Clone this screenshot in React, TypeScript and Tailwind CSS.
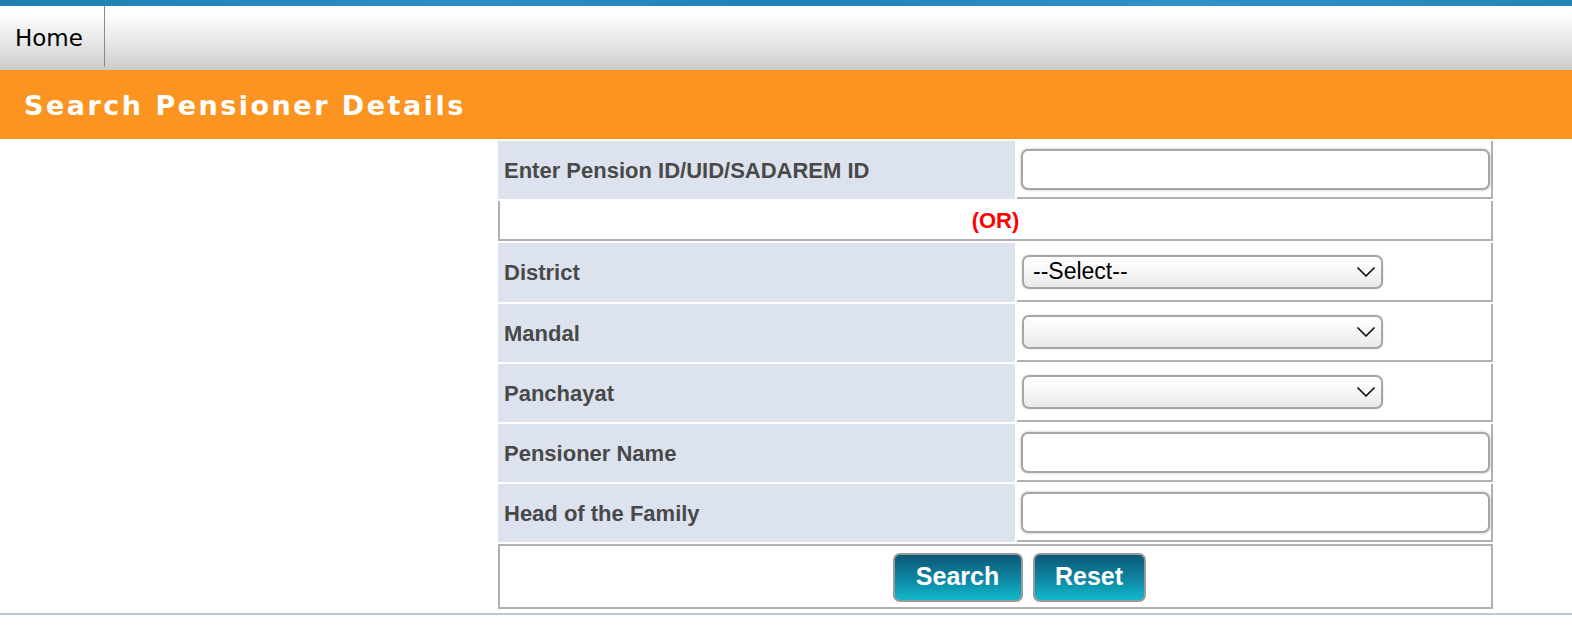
import React from "react";

function Chevron() {
  return (
    <svg width="18" height="10" viewBox="0 0 18 10" fill="none">
      <polyline points="1,1 9,9 17,1" stroke="#111" strokeWidth="1.7" strokeLinejoin="round" strokeLinecap="round" />
    </svg>
  );
}

function Label({ children, tall }: { children: React.ReactNode; tall?: boolean }) {
  return (
    <div
      className={`w-[517px] shrink-0 bg-[#dce3ee] pl-[6px] flex items-center text-[22px] font-bold text-[#494949] ${tall ? "h-[59px]" : "h-[58px]"}`}
    >
      {children}
    </div>
  );
}

function TextRow({ label }: { label: string }) {
  return (
    <div className="flex gap-[2px]">
      <Label>{label}</Label>
      <div className="flex-1 flex items-center border-r-2 border-b-2 border-[#b0b0b0] pl-[4px] pr-[1px]">
        <input
          type="text"
          className="w-full h-[41px] rounded-[7px] border-2 border-[#a6a6a6] bg-white shadow-[0_0_3px_rgba(0,0,0,0.25)] outline-none"
        />
      </div>
    </div>
  );
}

function SelectRow({ label, value, tall }: { label: string; value: string; tall?: boolean }) {
  return (
    <div className="flex gap-[2px]">
      <Label tall={tall}>{label}</Label>
      <div className="flex-1 flex items-center border-r-2 border-b-2 border-[#b0b0b0] pl-[5px]">
        <div className="w-[361px] h-[34px] rounded-[7px] border-2 border-[#a6a6a6] bg-[linear-gradient(#ffffff,#f6f6f6_50%,#e9e9e9)] shadow-[0_0_2px_rgba(0,0,0,0.2)] flex items-center justify-between pl-[9px] pr-[6px]">
          <span className="text-[23px] text-black leading-none">{value}</span>
          <Chevron />
        </div>
      </div>
    </div>
  );
}

export default function App() {
  return (
    <div className="w-full min-h-[630px] bg-white font-['Liberation_Sans',Arial,sans-serif]">
      {/* top blue stripe */}
      <div className="h-[6px] bg-[linear-gradient(90deg,#1f7fb3,#2a8fc4_30%,#1f82b6_50%,#2d93c7_75%,#2285b8)]" />
      {/* nav */}
      <div className="h-[64px] flex bg-[linear-gradient(#ffffff,#fbfbfb_18%,#e6e6e6_60%,#cdcbcb)] border-b border-[#c4d0d7]">
        <div className="h-[61px] flex items-center pl-[15px] pr-[21px] pt-[3px] border-r-[1.5px] border-[#8a8a8a] text-[23px] text-black font-['DejaVu_Sans',Verdana,sans-serif]">
          Home
        </div>
      </div>
      {/* orange title band */}
      <div className="h-[69px] bg-[#fb9421] flex items-center pl-[24px]">
        <h1 className="text-[27px] font-bold text-white tracking-[2.5px] font-['DejaVu_Sans',Verdana,sans-serif] leading-none pt-[1px]">
          Search Pensioner Details
        </h1>
      </div>
      {/* form table */}
      <div className="ml-[498px] w-[995px] pt-[2px] flex flex-col gap-[2px]">
        <TextRow label="Enter Pension ID/UID/SADAREM ID" />
        <div className="h-[40px] flex items-center justify-center border-l-2 border-r-2 border-b-2 border-[#b0b0b0] text-[22px] font-bold text-[#ff0000]">
          (OR)
        </div>
        <SelectRow label="District" value="--Select--" tall />
        <SelectRow label="Mandal" value="" />
        <SelectRow label="Panchayat" value="" />
        <TextRow label="Pensioner Name" />
        <TextRow label="Head of the Family" />
        <div className="h-[65px] border-2 border-[#b0b0b0] flex items-center justify-center gap-[10px] pl-[47px] pt-[1px]">
          <button className="w-[130px] h-[49px] rounded-[7px] border-2 border-[#9a9a9a] bg-[linear-gradient(#0b5877,#0e87a3_55%,#11b9cd)] text-white text-[25px] font-bold">
            Search
          </button>
          <button className="w-[113px] h-[49px] rounded-[7px] border-2 border-[#9a9a9a] bg-[linear-gradient(#0b5877,#0e87a3_55%,#11b9cd)] text-white text-[25px] font-bold">
            Reset
          </button>
        </div>
      </div>
      <div className="mt-[4px] h-[2px] bg-[#b7cbe1]" />
    </div>
  );
}
